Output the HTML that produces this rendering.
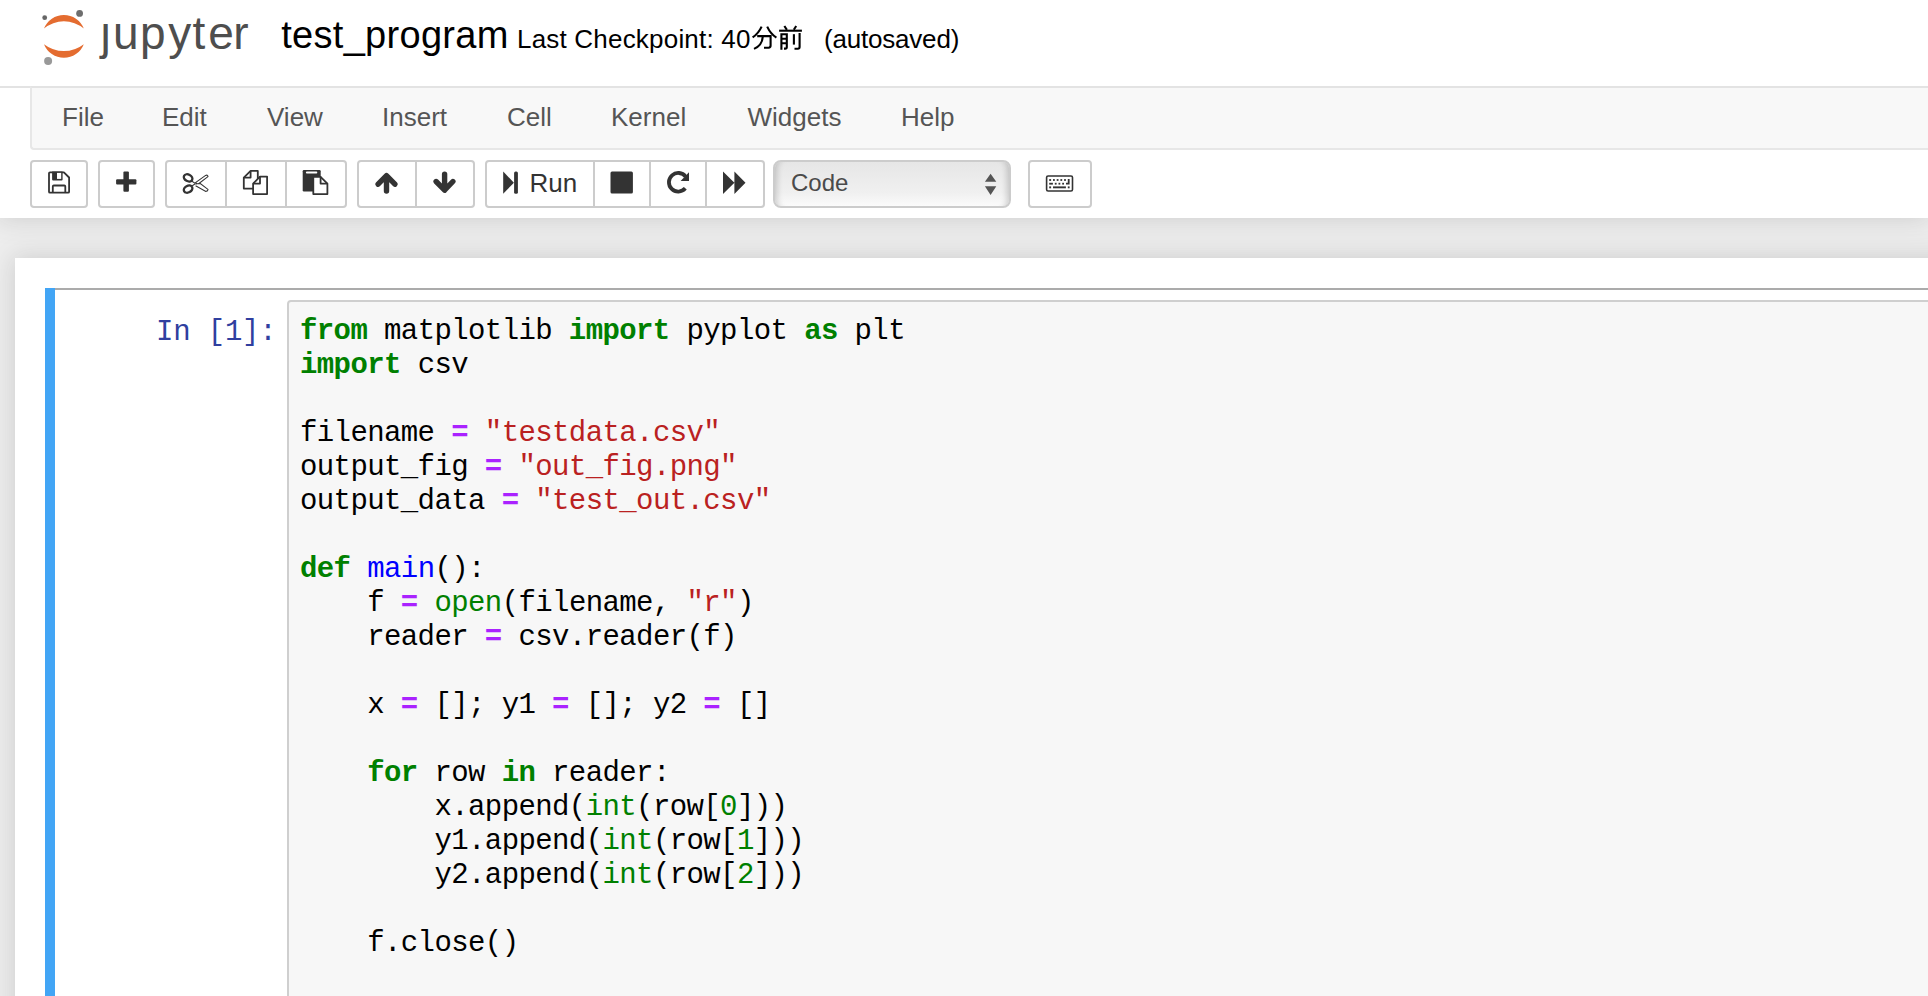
<!DOCTYPE html>
<html><head><meta charset="utf-8">
<style>
html,body{margin:0;padding:0}
body{width:1928px;height:996px;overflow:hidden;background:#eee;position:relative;font-family:"Liberation Sans",sans-serif;}
.abs{position:absolute}
.t{position:absolute;white-space:pre;font-family:"Liberation Sans",sans-serif}
#header{position:absolute;left:0;top:0;width:1928px;height:218px;background:#fff;box-shadow:0 0 24px 2px rgba(87,87,87,.2);z-index:2}
#hline{position:absolute;left:0;top:86px;width:1928px;height:2px;background:#e3e3e3}
#menubar{position:absolute;left:30px;top:86px;width:1920px;height:62px;background:#f8f8f8;border-left:2px solid #e7e7e7;border-bottom:2px solid #e7e7e7;border-top:2px solid #e3e3e3;box-sizing:border-box;height:64px;border-bottom-left-radius:4px}
.menu{font-size:26px;line-height:26px;color:#555;top:104px}
.btn{position:absolute;top:160px;height:48px;box-sizing:border-box;border:2px solid #ccc;border-radius:4px;background:#fff}
.div{position:absolute;top:160px;width:2px;height:48px;background:#ccc}
#nb{position:absolute;left:15px;top:258px;width:1940px;height:800px;background:#fff;box-shadow:0 0 24px 2px rgba(87,87,87,.2)}
#cellborder{position:absolute;left:45px;top:288px;width:1900px;height:800px;box-sizing:border-box;border-top:2px solid #ababab}
#bluebar{position:absolute;left:45px;top:288px;width:10px;height:800px;background:#42a5f5}
#input{position:absolute;left:287px;top:300px;width:1700px;height:800px;box-sizing:border-box;border:2px solid #cfcfcf;border-radius:4px;background:#f7f7f7}
pre{margin:0}
#code{position:absolute;left:300px;top:315.2px;font-family:"Liberation Mono",monospace;font-size:29px;letter-spacing:-0.6px;line-height:34px;color:#000;white-space:pre}
.k{color:#008000;font-weight:bold}
.o{color:#aa22ff;font-weight:bold}
.s{color:#ba2121}
.d{color:#0000ff}
.b{color:#008000}
#prompt{position:absolute;left:156.1px;top:319.4px;font-family:"Liberation Mono",monospace;font-size:29px;letter-spacing:-0.2px;line-height:28px;color:#303f9f;white-space:pre}
.jw{top:10px;font-size:46px;line-height:46px;color:#4e4e4e}
</style></head><body>
<div id="nb"></div>
<div id="cellborder"></div>
<div id="bluebar"></div>
<div id="input"></div>
<div id="prompt">In [1]:</div>
<pre id="code"><span class="k">from</span> matplotlib <span class="k">import</span> pyplot <span class="k">as</span> plt
<span class="k">import</span> csv

filename <span class="o">=</span> <span class="s">"testdata.csv"</span>
output_fig <span class="o">=</span> <span class="s">"out_fig.png"</span>
output_data <span class="o">=</span> <span class="s">"test_out.csv"</span>

<span class="k">def</span> <span class="d">main</span>():
    f <span class="o">=</span> <span class="b">open</span>(filename, <span class="s">"r"</span>)
    reader <span class="o">=</span> csv.reader(f)

    x <span class="o">=</span> []; y1 <span class="o">=</span> []; y2 <span class="o">=</span> []

    <span class="k">for</span> row <span class="k">in</span> reader:
        x.append(<span class="b">int</span>(row[<span class="b">0</span>]))
        y1.append(<span class="b">int</span>(row[<span class="b">1</span>]))
        y2.append(<span class="b">int</span>(row[<span class="b">2</span>]))

    f.close()
</pre>

<div id="header">
  <div id="hline"></div>
  <!-- logo -->
  <svg class="abs" style="left:0;top:0" width="100" height="80" viewBox="0 0 100 80">
    <path d="M44 28.5 A21.36 21.36 0 0 1 83.8 28.5 A31.1 31.1 0 0 0 44 28.5Z" fill="#e46c30"/>
    <path d="M44 44.2 A21.36 21.36 0 0 0 83.8 44.2 A32.5 32.5 0 0 1 44 44.2Z" fill="#e46c30"/>
    <circle cx="44.7" cy="17.7" r="2.4" fill="#666"/>
    <circle cx="79.6" cy="13.4" r="3.4" fill="#6e6e6e"/>
    <circle cx="48.1" cy="61" r="4" fill="#999"/>
  </svg>
  <div class="t jw" style="left:100.5px">ȷ</div><div class="t jw" style="left:112.9px">u</div><div class="t jw" style="left:140.1px">p</div><div class="t jw" style="left:168.2px">y</div><div class="t jw" style="left:192.5px">t</div><div class="t jw" style="left:208.35px">e</div><div class="t jw" style="left:233.25px">r</div>
  <div class="t" style="left:281.2px;top:15.8px;font-size:38px;line-height:38px;color:#000;letter-spacing:0.3px">test_program</div>
  <div class="t" style="left:517px;top:26.2px;font-size:26px;line-height:26px;color:#000;letter-spacing:0.2px">Last Checkpoint: 40</div>
  <div class="t" style="left:824px;top:26.2px;font-size:26px;line-height:26px;color:#000;letter-spacing:-0.2px">(autosaved)</div>

  <div id="menubar"></div>
  <div class="t menu" style="left:62px">File</div>
  <div class="t menu" style="left:162px">Edit</div>
  <div class="t menu" style="left:267px">View</div>
  <div class="t menu" style="left:382px">Insert</div>
  <div class="t menu" style="left:507px">Cell</div>
  <div class="t menu" style="left:611px">Kernel</div>
  <div class="t menu" style="left:747.5px">Widgets</div>
  <div class="t menu" style="left:901px">Help</div>

  <!-- toolbar -->
  <div class="btn" style="left:30px;width:58px"></div>
  <div class="btn" style="left:98px;width:57px"></div>
  <div class="btn" style="left:165px;width:182px"></div>
  <div class="div" style="left:225px"></div>
  <div class="div" style="left:285px"></div>
  <div class="btn" style="left:357px;width:118px"></div>
  <div class="div" style="left:415px"></div>
  <div class="btn" style="left:485px;width:280px"></div>
  <div class="div" style="left:593px"></div>
  <div class="div" style="left:649px"></div>
  <div class="div" style="left:705px"></div>
  <div class="t" style="left:529.5px;top:170.1px;font-size:26px;line-height:26px;color:#333">Run</div>
  <div class="btn" style="left:773px;width:238px;border-radius:8px;background:linear-gradient(#e6e6e6,#f0f0f0 70%,#fbfbfb);box-shadow:inset 8px 0 6px -6px rgba(0,0,0,.18),inset -8px 0 6px -6px rgba(0,0,0,.18)"></div>
  <div class="t" style="left:791px;top:170.6px;font-size:24px;line-height:24px;color:#4a4a4a">Code</div>
  <div class="btn" style="left:1028px;width:64px"></div>

  <svg class="abs" style="left:0;top:0" width="1928" height="218" viewBox="0 0 1928 218">
    <!-- CJK fen qian -->
    <g fill="none" stroke="#000" stroke-width="2.1" stroke-linecap="butt" stroke-linejoin="miter">
      <path d="M761.6 26.6 Q758.5 33.5 752.6 37.4"/>
      <path d="M767.2 26.6 Q770.5 33.8 776.4 37.6"/>
      <path d="M757.2 36.1 H770.6 V45.6 Q770.6 47.7 768.6 47.7 H764"/>
      <path d="M762.7 37 Q762.2 45.3 754 48.9"/>
      <path d="M784.4 26 L786.9 29.8"/>
      <path d="M796.2 26 L793.8 29.8"/>
      <path d="M779.1 30.7 H801.9"/>
      <path d="M781.4 49.8 V34.3 H786.8 V47.2 Q786.8 48.6 785.2 48.6 H784"/>
      <path d="M781.4 38.7 H786.8 M781.4 43.2 H786.8"/>
      <path d="M793.9 34.2 V44.6"/>
      <path d="M799.6 33 V47 Q799.6 48.7 797.8 48.7 H794.5"/>
    </g>
    <g fill="#333">
      <!-- save -->
      <path d="M49 173.3 Q49 172.3 50 172.3 L63.9 172.3 L69.1 177.5 L69.1 191.7 Q69.1 192.7 68.1 192.7 L50 192.7 Q49 192.7 49 191.7 Z" fill="none" stroke="#333" stroke-width="1.8" stroke-linejoin="round"/>
      <path d="M52.1 171.6 H62.6 V179.6 Q62.6 180.6 61.6 180.6 H53.1 Q52.1 180.6 52.1 179.6 Z"/>
      <rect x="57" y="172.9" width="4.2" height="6" fill="#fff"/>
      <path d="M52.8 192.7 V186.5 Q52.8 185.5 53.8 185.5 H64.3 Q65.3 185.5 65.3 186.5 V192.7" fill="none" stroke="#333" stroke-width="1.8"/>
      <!-- plus -->
      <rect x="123.4" y="171.6" width="5.5" height="20.2" rx="1"/>
      <rect x="116.1" y="179.2" width="20.3" height="5.2" rx="1"/>
      <!-- scissors -->
      <g fill="none" stroke="#333">
        <ellipse cx="188.1" cy="177.9" rx="4.5" ry="3.3" transform="rotate(28 188.1 177.9)" stroke-width="2.4"/>
        <ellipse cx="188.1" cy="189.1" rx="4.5" ry="3.3" transform="rotate(-28 188.1 189.1)" stroke-width="2.4"/>
        <path d="M191.6 181 L194.8 183.2 L205.6 175.4 Q207.6 174.6 208 176.6 L196.6 185.2" stroke-width="1.1" fill="#fff"/>
        <path d="M191.6 186.2 L194.8 184 L200.3 183.5 L208 189.4 Q208 191.2 205.8 191.4 L195.6 185.8" stroke-width="1.1" fill="#fff"/>
      </g>
      <circle cx="196.4" cy="183.4" r="0.8"/>
      <!-- copy -->
      <g fill="#fff" stroke="#333" stroke-width="1.8" stroke-linejoin="round">
        <path d="M250.6 170.9 H257.8 V188.6 H243.8 V177.6 Z"/>
        <path d="M250.6 170.9 V177.6 H243.8" fill="none"/>
        <path d="M260 176.6 H267.1 V194.1 H253.1 V183.6 Z"/>
        <path d="M260 176.6 V183.6 H253.1" fill="none"/>
      </g>
      <!-- paste -->
      <rect x="302.7" y="170" width="18" height="21.4" rx="1.2"/>
      <rect x="305.9" y="171.5" width="11.4" height="2.1" rx="1" fill="#fff"/>
      <g fill="#fff" stroke="#333" stroke-width="1.8" stroke-linejoin="round">
        <path d="M313.3 176.8 H320.6 L327.4 183.6 V194.1 H313.3 Z"/>
        <path d="M320.6 176.8 V183.6 H327.4" fill="none"/>
      </g>
      <!-- up / down -->
      <g fill="none" stroke="#333" stroke-width="5.4" stroke-linecap="round" stroke-linejoin="round">
        <path d="M378.1 184.2 L386.5 175.6 L394.9 184.2 M386.5 176 V191.1"/>
        <path d="M436.1 181.5 L444.6 190.2 L452.9 181.5 M444.6 174.1 V188"/>
      </g>
      <!-- step forward -->
      <path d="M503.2 171.6 L513.9 182.7 L503.2 193.8 Z"/>
      <rect x="514.1" y="171.4" width="3.8" height="22.4" rx="1.5"/>
      <!-- stop -->
      <rect x="610.5" y="171.5" width="22.4" height="22.1" rx="1.5"/>
      <!-- repeat -->
      <path d="M685.3 188.3 A9.3 9.3 0 1 1 685.6 176.6" fill="none" stroke="#333" stroke-width="3.8"/>
      <path d="M680.6 180.9 L689 180.9 L689 172.3 Z"/>
      <!-- forward -->
      <path d="M723 171.5 L734.4 182.7 L723 193.9 Z M734.4 171.5 L745.5 182.7 L734.4 193.9 Z"/>
      <!-- select arrows -->
      <path d="M984.9 181.7 L990.6 173.8 L996.3 181.7 Z M984.9 186.2 L996.3 186.2 L990.6 195 Z" fill="#555"/>
      <!-- keyboard -->
      <rect x="1046.6" y="176" width="25.9" height="15" rx="1.5" fill="none" stroke="#333" stroke-width="1.6"/>
      <rect x="1049.2" y="179.1" width="1.9" height="1.8"/><rect x="1053" y="179.1" width="1.8" height="1.8"/>
      <rect x="1056.7" y="179.1" width="1.8" height="1.8"/><rect x="1060.4" y="179.1" width="1.8" height="1.8"/>
      <rect x="1064.1" y="179.1" width="1.8" height="1.8"/>
      <path d="M1067.8 179.1 H1069.6 V184.6 H1066 V182.8 H1067.8 Z"/>
      <rect x="1049.2" y="182.8" width="3.7" height="1.8"/><rect x="1054.8" y="182.8" width="1.8" height="1.8"/>
      <rect x="1058.5" y="182.8" width="1.8" height="1.8"/><rect x="1062.2" y="182.8" width="1.8" height="1.8"/>
      <rect x="1049.2" y="186.4" width="1.9" height="1.9"/><rect x="1053" y="186.4" width="12.9" height="1.9"/>
      <rect x="1067.8" y="186.4" width="1.8" height="1.9"/>
    </g>
  </svg>
</div>
</body></html>
